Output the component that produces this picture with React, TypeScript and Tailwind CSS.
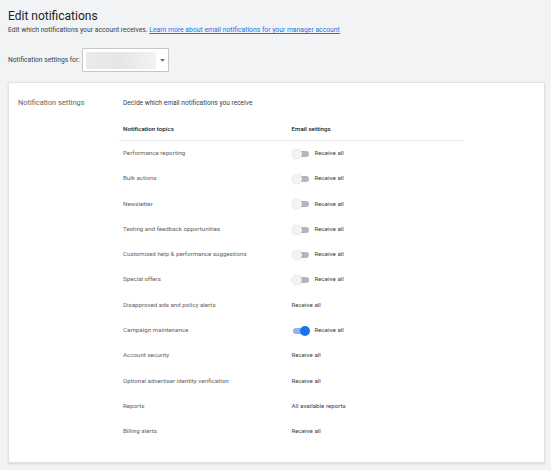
const topics = [
  { name: 'Performance reporting', setting: 'Receive all', toggle: 'off' },
  { name: 'Bulk actions', setting: 'Receive all', toggle: 'off' },
  { name: 'Newsletter', setting: 'Receive all', toggle: 'off' },
  { name: 'Testing and feedback opportunities', setting: 'Receive all', toggle: 'off' },
  { name: 'Customized help & performance suggestions', setting: 'Receive all', toggle: 'off' },
  { name: 'Special offers', setting: 'Receive all', toggle: 'off' },
  { name: 'Disapproved ads and policy alerts', setting: 'Receive all', toggle: null },
  { name: 'Campaign maintenance', setting: 'Receive all', toggle: 'on' },
  { name: 'Account security', setting: 'Receive all', toggle: null },
  { name: 'Optional advertiser identity verification', setting: 'Receive all', toggle: null },
  { name: 'Reports', setting: 'All available reports', toggle: null },
  { name: 'Billing alerts', setting: 'Receive all', toggle: null },
]

function Toggle({ on }: { on: boolean }) {
  return (
    <span className="relative w-[18px] h-[10px] shrink-0">
      <span className={`absolute left-[1px] right-[1px] top-[2px] h-[6px] rounded-full ${on ? 'bg-[#8ab4f8]' : 'bg-[#b4b6b9]'}`} />
      <span
        className={`absolute top-0 w-[10px] h-[10px] rounded-full ${on ? 'right-0 bg-[#1a73e8]' : 'left-0 bg-[#f3f3f3] shadow-[0_0_1px_rgba(0,0,0,0.25)]'}`}
      />
    </span>
  )
}

export default function App() {
  return (
    <div className="w-[551px] h-[470px] bg-[#f1f3f4] px-2 overflow-hidden font-['Roboto','Liberation_Sans',sans-serif] text-[#5f6368]">
      {/* Header */}
      <h1 className="pt-[9px] text-[12px] leading-[14px] text-[#202124] font-normal">Edit notifications</h1>
      <p className="mt-[3px] text-[6.8px] leading-[9px] text-[#3c4043]">
        Edit which notifications your account receives.{' '}
        <span className="text-[#1a73e8] underline">Learn more about email notifications for your manager account</span>
      </p>

      {/* Account selector */}
      <div className="mt-[13px] flex items-center gap-[2px]">
        <span className="text-[6.7px] text-[#3c4043]">Notification settings for:</span>
        <div className="w-[87px] h-[24px] bg-white border border-[#c4c7c5] rounded-[1px] flex items-center px-[3px] gap-[2px]">
          <div className="w-[70px] h-[17px] bg-gradient-to-r from-[#ebebeb] via-[#e6e6e6] to-[#f3f3f3] blur-[0.5px]" />
          <svg width="5" height="3" viewBox="0 0 6 4" className="ml-[2px]">
            <path d="M0 0 L6 0 L3 3.5 Z" fill="#5f6368" />
          </svg>
        </div>
      </div>

      {/* Settings card */}
      <div className="mt-[10px] w-[537px] h-[381px] bg-white border border-[#e3e3e3] shadow-[0_1px_2px_rgba(0,0,0,0.12)] flex pt-[15px] pl-[9px]">
        <div className="w-[101px] shrink-0 text-[7.4px] leading-[10px] text-[#5f6368]">Notification settings</div>
        <div className="w-[345px]">
          <p className="pl-[4px] text-[6.6px] leading-[10px] text-[#3c4043]">Decide which email notifications you receive</p>
          <div className="mt-[11px] h-[22px] grid grid-cols-2 items-center border-b border-[#e6e6e6] text-[6.2px] font-medium text-[#202124]">
            <span className="pl-[4px]">Notification topics</span>
            <span>Email settings</span>
          </div>
          {topics.map((t) => (
            <div key={t.name} className="h-[25.3px] grid grid-cols-2 items-center text-[6.2px] text-[#5f6368]">
              <span className="pl-[4px]">{t.name}</span>
              <span className="flex items-center gap-[5px]">
                {t.toggle && <Toggle on={t.toggle === 'on'} />}
                <span className="text-[#3c4043]">{t.setting}</span>
              </span>
            </div>
          ))}
        </div>
      </div>
    </div>
  )
}
